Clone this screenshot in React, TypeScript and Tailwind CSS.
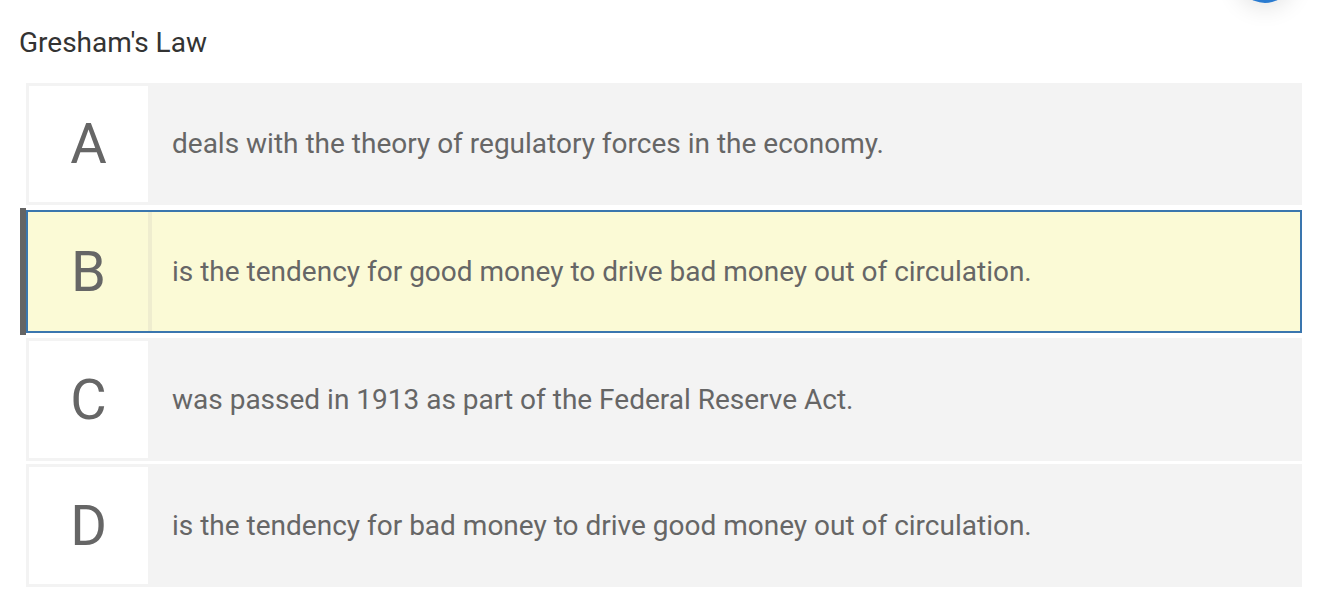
import React from "react";

interface Choice {
  letter: string;
  text: string;
}

const choices: Choice[] = [
  { letter: "A", text: "deals with the theory of regulatory forces in the economy." },
  { letter: "B", text: "is the tendency for good money to drive bad money out of circulation." },
  { letter: "C", text: "was passed in 1913 as part of the Federal Reserve Act." },
  { letter: "D", text: "is the tendency for bad money to drive good money out of circulation." },
];

const selected = "B";

function ChoiceRow({ choice, active, first }: { choice: Choice; active: boolean; first: boolean }) {
  if (active) {
    // selected answer: dark marker on the left, blue outline, pale yellow fill
    return (
      <div className="h-[127px] border-l-[6px] border-[#646464] flex">
        <div className="my-[2px] flex-1 flex border-2 border-[#3a76ae] bg-[#fbfad6]">
          <div className="w-[123px] ml-px border-r-4 border-[#efedcf] flex items-center justify-center text-[56px] text-[#666]">
            {choice.letter}
          </div>
          <div className="flex items-center pl-[20px] text-[28px] text-[#666]">{choice.text}</div>
        </div>
      </div>
    );
  }

  return (
    <div className={`${first ? "h-[122px]" : "h-[123px]"} ml-[6px] p-[3px] bg-[#f3f3f3] flex`}>
      <div className="w-[119px] bg-white flex items-center justify-center text-[56px] text-[#666]">
        {choice.letter}
      </div>
      <div className="flex items-center pl-[24px] text-[28px] text-[#666]">{choice.text}</div>
    </div>
  );
}

export default function App() {
  return (
    <div className="relative min-h-screen overflow-hidden bg-white font-['Roboto','Liberation_Sans',sans-serif]">
      {/* floating action button peeking in at the top */}
      <div className="absolute left-[1237px] -top-[53px] w-14 h-14 rounded-full bg-[#2a7bd0] shadow-[0_4px_24px_rgba(0,0,0,0.12)]" />

      <div className="pt-[25px] pl-[19px]">
        <h1 className="text-[28px] leading-[36px] text-[#333]">Gresham's Law</h1>
      </div>

      <div className="mt-[22px] ml-[20px] mr-[24px] flex flex-col gap-[3px]">
        {choices.map((c, i) => (
          <ChoiceRow key={c.letter} choice={c} active={c.letter === selected} first={i === 0} />
        ))}
      </div>
    </div>
  );
}
